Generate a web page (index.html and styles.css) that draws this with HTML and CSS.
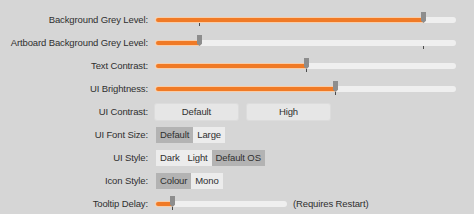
FILE: index.html
```html
<!DOCTYPE html>
<html>
<head>
<meta charset="utf-8">
<link rel="stylesheet" href="styles.css">
</head>
<body>
<div class="panel">
  <span class="label">Background Grey Level:</span>
  <div class="slider wide">
    <div class="fill" style="width:268px"></div>
    <div class="tick" style="left:44px"></div>
    <div class="handle" style="left:266px"></div>
  </div>

  <span class="label">Artboard Background Grey Level:</span>
  <div class="slider wide">
    <div class="fill" style="width:44px"></div>
    <div class="tick" style="left:268px"></div>
    <div class="handle" style="left:42px"></div>
  </div>

  <span class="label">Text Contrast:</span>
  <div class="slider wide">
    <div class="fill" style="width:151px"></div>
    <div class="tick" style="left:151px"></div>
    <div class="handle" style="left:149px"></div>
  </div>

  <span class="label">UI Brightness:</span>
  <div class="slider wide">
    <div class="fill" style="width:180px"></div>
    <div class="tick" style="left:180px"></div>
    <div class="handle" style="left:178px"></div>
  </div>

  <span class="label">UI Contrast:</span>
  <div class="buttons">
    <span class="btn">Default</span>
    <span class="btn">High</span>
  </div>

  <span class="label">UI Font Size:</span>
  <div class="seg">
    <span class="opt on">Default</span><span class="opt">Large</span>
  </div>

  <span class="label">UI Style:</span>
  <div class="seg">
    <span class="opt">Dark</span><span class="opt">Light</span><span class="opt on">Default OS</span>
  </div>

  <span class="label">Icon Style:</span>
  <div class="seg">
    <span class="opt on">Colour</span><span class="opt">Mono</span>
  </div>

  <span class="label">Tooltip Delay:</span>
  <div class="inline">
    <div class="slider small">
      <div class="fill" style="width:17px"></div>
      <div class="tick" style="left:17px"></div>
      <div class="handle" style="left:15px"></div>
    </div>
    <span class="note">(Requires Restart)</span>
  </div>
</div>
</body>
</html>
```
FILE: styles.css
```css
html, body {
  margin: 0;
  padding: 0;
  background: #d6d6d6;
}
body {
  width: 474px;
  height: 214px;
  overflow: hidden;
  font-family: "Liberation Sans", Arial, sans-serif;
  font-size: 9.5px;
  letter-spacing: -0.12px;
  color: #2f2f2f;
}
.panel {
  display: grid;
  grid-template-columns: 148px 1fr;
  column-gap: 7px;
  grid-auto-rows: 23px;
  align-items: center;
  padding-top: 8px;
}
.label {
  text-align: right;
  white-space: nowrap;
}
.slider {
  position: relative;
  height: 6px;
  background: #efefef;
  border-radius: 3px;
  margin-top: 1px;
}
.slider.wide { width: 301px; }
.slider.small { width: 132px; }
.fill {
  height: 4px;
  margin-top: 1px;
  margin-left: 1px;
  background: #f07a26;
  border-radius: 2px;
  box-shadow: 0 0 0 1px #f8cda8;
}
.handle {
  position: absolute;
  top: -5px;
  width: 5px;
  height: 11px;
  background: #8d8d8d;
  clip-path: polygon(0 0, 100% 0, 100% 80%, 50% 100%, 0 80%);
}
.tick {
  position: absolute;
  top: 6px;
  width: 1px;
  height: 3px;
  background: #4a4a4a;
}
.buttons {
  display: flex;
  gap: 9px;
}
.btn {
  width: 83px;
  height: 16px;
  line-height: 16px;
  text-align: center;
  background: #e6e6e6;
  border-radius: 2px;
  box-shadow: 0 0 0 1px #dcdcdc;
}
.seg {
  display: flex;
  margin-left: 1px;
}
.opt {
  height: 16px;
  line-height: 16px;
  padding: 0 4px;
  background: #ececec;
}
.opt.on {
  background: #b3b3b3;
}
.inline {
  display: flex;
  align-items: center;
  gap: 6px;
}
.note {
  white-space: nowrap;
}
```
